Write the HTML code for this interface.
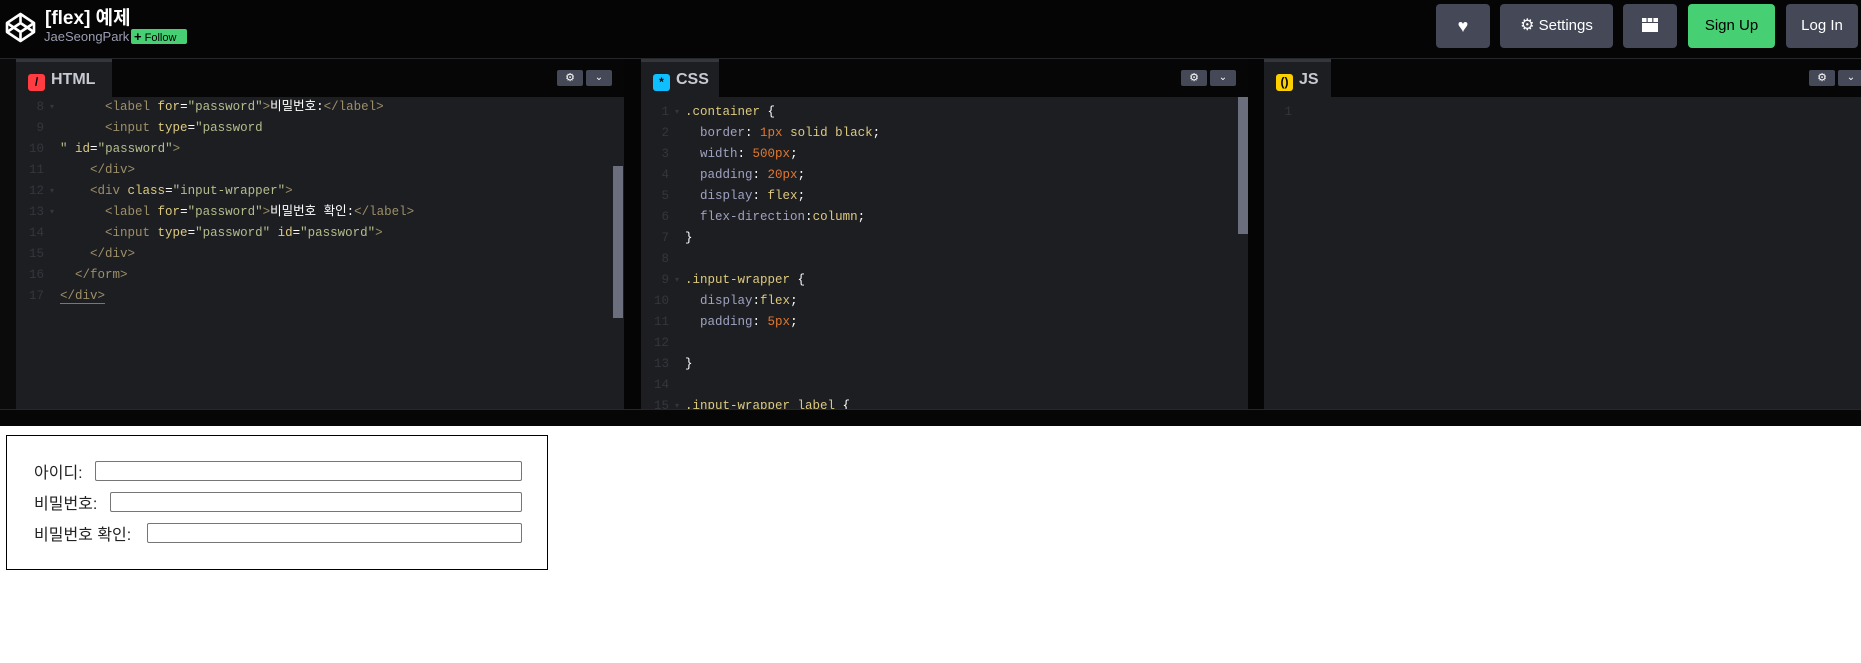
<!DOCTYPE html>
<html><head><meta charset="utf-8">
<style>
*{box-sizing:border-box;margin:0;padding:0}
body{width:1861px;height:663px;background:#fff;font-family:"Liberation Sans","Noto Sans CJK KR",sans-serif;position:relative;overflow:hidden}
.hdr{position:absolute;left:0;top:0;width:1861px;height:59px;background:#050505;border-bottom:1px solid #26272b}
.title{position:absolute;left:45px;top:3px;color:#fff;font-size:19px;font-weight:bold}
.user{position:absolute;left:44px;top:29px;color:#9a9db0;font-size:13px}
.follow{position:absolute;left:131px;top:29px;width:56px;height:15px;background:#47cf73;color:#000;font-size:11px;border-radius:2px;line-height:15px;padding-left:3px}
.btn{position:absolute;top:4px;height:44px;background:#444857;border-radius:4px;color:#fff;font-size:15px;line-height:44px;text-align:center}
.ed{position:absolute;top:59px;height:350px;background:#1d1e22}
.bar{position:absolute;left:0;top:0;right:0;height:38px;background:#060606}
.tab{position:absolute;left:0;top:0;height:38px;background:#1d1e22;border-top:3px solid #34363e;color:#c7c9d3;font-weight:bold;font-size:16px;line-height:35px;padding-left:12px}
.ic{display:inline-block;width:17px;height:17px;border-radius:3px;vertical-align:-2px;margin-right:6px;text-align:center;font-size:12px;line-height:17px;color:#000}
.sb{position:absolute;top:11px;width:26px;height:16px;background:#444857;border-radius:2px}
.code{position:absolute;left:0;top:38px;font-family:"Liberation Mono","Noto Sans CJK KR",monospace;font-size:12.5px;line-height:21px;color:#fff;white-space:pre}
.ln{display:inline-block;width:28px;text-align:right;color:#34363d}
.ar{display:inline-block;width:16px;color:#34363d;font-size:8px;text-align:center;vertical-align:1px}
.t{color:#9d8f68}.a{color:#ddca7e}.s{color:#b3bd8c}.p{color:#a0a2c0}.n{color:#e2772e}.y{color:#ddca7e}
.scr{position:absolute;width:10px;background:#6b6e7c}
.res{position:absolute;left:6px;top:435px;width:542px;height:135px;border:1px solid #000}
.row{position:absolute;left:27px;font-size:16px;color:#222;line-height:20px;height:20px}
.inp{position:absolute;height:20px;border:1px solid #767676;border-radius:2px;right:25px}
</style></head><body>
<div class="hdr">
<svg style="position:absolute;left:5px;top:12px" width="31" height="31" viewBox="0 0 31 31" fill="none" stroke="#fff" stroke-width="2.6" stroke-linejoin="round"><path d="M15.5 2L29 11v9L15.5 29 2 20v-9z"/><path d="M15.5 2v8M15.5 21v8M2 11l13.5 9L29 11M2 20l13.5-9L29 20"/></svg>
<div class="title">[flex] 예제</div>
<div class="user">JaeSeongPark</div>
<div class="follow"><b style="font-size:13px">+</b> Follow</div>
<div class="btn" style="left:1436px;width:54px;font-size:18px">&#9829;</div>
<div class="btn" style="left:1500px;width:113px"><span style="font-size:16px;vertical-align:0">&#9881;</span> Settings</div>
<div class="btn" style="left:1623px;width:54px"><svg width="16" height="14" viewBox="0 0 16 14" style="vertical-align:-2px"><rect x="0" y="0" width="4.5" height="4" fill="#fff"/><rect x="5.7" y="0" width="4.5" height="4" fill="#fff"/><rect x="11.4" y="0" width="4.6" height="4" fill="#fff"/><rect x="0" y="5" width="16" height="9" fill="#fff"/></svg></div>
<div class="btn" style="left:1688px;width:87px;background:#47cf73;color:#000">Sign Up</div>
<div class="btn" style="left:1786px;width:72px">Log In</div>
</div>
<div style="position:absolute;left:0;top:59px;width:16px;height:350px;background:#0b0b0c"></div>
<div style="position:absolute;left:624px;top:59px;width:17px;height:350px;background:#050505"></div>
<div style="position:absolute;left:1248px;top:59px;width:16px;height:350px;background:#050505"></div>

<div class="ed" style="left:16px;width:608px">
<div class="bar"></div>
<div class="tab" style="width:96px"><span class="ic" style="background:#ff3c41">/</span>HTML</div>
<div class="sb" style="left:541px;color:#fff;font-size:11px;text-align:center;line-height:16px">&#9881;</div>
<div class="sb" style="left:570px;color:#fff;font-size:10px;text-align:center;line-height:16px">&#8964;</div>
<div class="code"><span class="ln">8</span><span class="ar">&#9662;</span>      <span class="t">&lt;label</span> <span class="a">for</span>=<span class="s">"password"</span><span class="t">&gt;</span>비밀번호:<span class="t">&lt;/label&gt;</span>
<span class="ln">9</span><span class="ar"></span>      <span class="t">&lt;input</span> <span class="a">type</span>=<span class="s">"password</span>
<span class="ln">10</span><span class="ar"></span><span class="s">"</span> <span class="a">id</span>=<span class="s">"password"</span><span class="t">&gt;</span>
<span class="ln">11</span><span class="ar"></span>    <span class="t">&lt;/div&gt;</span>
<span class="ln">12</span><span class="ar">&#9662;</span>    <span class="t">&lt;div</span> <span class="a">class</span>=<span class="s">"input-wrapper"</span><span class="t">&gt;</span>
<span class="ln">13</span><span class="ar">&#9662;</span>      <span class="t">&lt;label</span> <span class="a">for</span>=<span class="s">"password"</span><span class="t">&gt;</span>비밀번호 확인:<span class="t">&lt;/label&gt;</span>
<span class="ln">14</span><span class="ar"></span>      <span class="t">&lt;input</span> <span class="a">type</span>=<span class="s">"password"</span> <span class="a">id</span>=<span class="s">"password"</span><span class="t">&gt;</span>
<span class="ln">15</span><span class="ar"></span>    <span class="t">&lt;/div&gt;</span>
<span class="ln">16</span><span class="ar"></span>  <span class="t">&lt;/form&gt;</span>
<span class="ln">17</span><span class="ar"></span><span class="t" style="border-bottom:1px solid #777">&lt;/div&gt;</span></div>
<div class="scr" style="left:597px;top:107px;height:152px"></div>
</div>

<div class="ed" style="left:641px;width:607px">
<div class="bar"></div>
<div class="tab" style="width:78px"><span class="ic" style="background:#0ebeff">*</span>CSS</div>
<div class="sb" style="left:540px;color:#fff;font-size:11px;text-align:center;line-height:16px">&#9881;</div>
<div class="sb" style="left:569px;color:#fff;font-size:10px;text-align:center;line-height:16px">&#8964;</div>
<div class="code" style="top:43px"><span class="ln">1</span><span class="ar">&#9662;</span><span class="y">.container</span> {
<span class="ln">2</span><span class="ar"></span>  <span class="p">border</span>: <span class="n">1px</span> <span class="y">solid black</span>;
<span class="ln">3</span><span class="ar"></span>  <span class="p">width</span>: <span class="n">500px</span>;
<span class="ln">4</span><span class="ar"></span>  <span class="p">padding</span>: <span class="n">20px</span>;
<span class="ln">5</span><span class="ar"></span>  <span class="p">display</span>: <span class="y">flex</span>;
<span class="ln">6</span><span class="ar"></span>  <span class="p">flex-direction</span>:<span class="y">column</span>;
<span class="ln">7</span><span class="ar"></span>}
<span class="ln">8</span><span class="ar"></span>
<span class="ln">9</span><span class="ar">&#9662;</span><span class="y">.input-wrapper</span> {
<span class="ln">10</span><span class="ar"></span>  <span class="p">display</span>:<span class="y">flex</span>;
<span class="ln">11</span><span class="ar"></span>  <span class="p">padding</span>: <span class="n">5px</span>;
<span class="ln">12</span><span class="ar"></span>
<span class="ln">13</span><span class="ar"></span>}
<span class="ln">14</span><span class="ar"></span>
<span class="ln">15</span><span class="ar">&#9662;</span><span class="y">.input-wrapper label</span> {</div>
<div class="scr" style="left:597px;top:38px;height:137px"></div>
</div>

<div class="ed" style="left:1264px;width:597px">
<div class="bar"></div>
<div class="tab" style="width:67px"><span class="ic" style="background:#fcd000">()</span>JS</div>
<div class="sb" style="left:545px;color:#fff;font-size:11px;text-align:center;line-height:16px">&#9881;</div>
<div class="sb" style="left:574px;color:#fff;font-size:10px;text-align:center;line-height:16px">&#8964;</div>
<div class="code" style="top:43px"><span class="ln">1</span></div>
</div>

<div style="position:absolute;left:0;top:409px;width:1861px;height:17px;background:#060606;border-top:1px solid #26272b"></div>

<div class="res">
<div class="row" style="top:28px">아이디:</div><div class="inp" style="left:88px;top:25px"></div>
<div class="row" style="top:59px">비밀번호:</div><div class="inp" style="left:103px;top:56px"></div>
<div class="row" style="top:90px">비밀번호 확인:</div><div class="inp" style="left:140px;top:87px"></div>
</div>
</body></html>
